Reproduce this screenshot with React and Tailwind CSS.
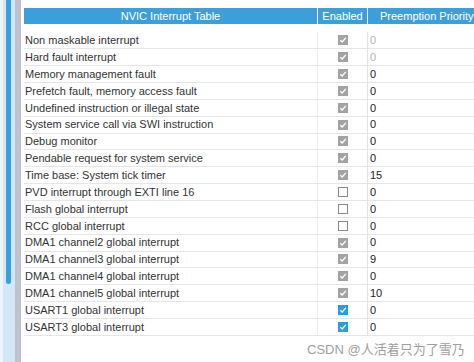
import React from "react";

const rows = [
  ["Non maskable interrupt", "gray", "0", true],
  ["Hard fault interrupt", "gray", "0", true],
  ["Memory management fault", "gray", "0"],
  ["Prefetch fault, memory access fault", "gray", "0"],
  ["Undefined instruction or illegal state", "gray", "0"],
  ["System service call via SWI instruction", "gray", "0"],
  ["Debug monitor", "gray", "0"],
  ["Pendable request for system service", "gray", "0"],
  ["Time base: System tick timer", "gray", "15"],
  ["PVD interrupt through EXTI line 16", "none", "0"],
  ["Flash global interrupt", "none", "0"],
  ["RCC global interrupt", "none", "0"],
  ["DMA1 channel2 global interrupt", "gray", "0"],
  ["DMA1 channel3 global interrupt", "gray", "9"],
  ["DMA1 channel4 global interrupt", "gray", "0"],
  ["DMA1 channel5 global interrupt", "gray", "10"],
  ["USART1 global interrupt", "blue", "0"],
  ["USART3 global interrupt", "blue", "0"],
];

function Check({ kind }) {
  if (kind === "none") {
    return <div className="w-[10px] h-[10px] border border-[#8a8a8a] bg-white" />;
  }
  const bg = kind === "blue" ? "bg-[#2a9de0]" : "bg-[#a3a3a3]";
  return (
    <div className={`w-[10px] h-[10px] ${bg} flex items-center justify-center`}>
      <svg width="8" height="8" viewBox="0 0 8 8">
        <path d="M1.3 4.2 L3.2 6 L6.8 1.8" fill="none" stroke="#ffffff" strokeWidth="1.3" />
      </svg>
    </div>
  );
}

export default function App() {
  return (
    <div
      className="relative w-[474px] h-[362px] bg-white flex overflow-hidden"
      style={{ fontFamily: '"Liberation Sans", Arial, sans-serif' }}
    >
      <div className="w-[3px] h-full bg-[#eef5fb]" />
      <div className="w-[3px] h-full bg-[#d3e8f7]" />
      <div className="w-[5px] h-full bg-[#d3e8f7]">
        <div className="w-full h-[284px] bg-[#3a9fdc] rounded-b-[3px]" />
      </div>
      <div className="w-[4px] h-full bg-[#d3e8f7]" />
      <div className="w-[6px] h-full bg-[#bcc3ca]" />
      <div className="w-[3px] h-full bg-white" />
      <div className="flex-1 flex flex-col pt-[8px] min-w-0">
        <div className="flex h-[16px] text-[11px] text-white leading-[16px]">
          <div className="w-[293px] bg-[#3d9fd9] text-center">NVIC Interrupt Table</div>
          <div className="w-[1px]" />
          <div className="w-[49px] bg-[#3d9fd9] text-center">Enabled</div>
          <div className="w-[1px]" />
          <div className="flex-1 bg-[#3d9fd9] pl-[12px] whitespace-nowrap overflow-hidden">
            Preemption Priority
          </div>
        </div>
        <div className="h-[8.4px]" />
        <div className="flex flex-col">
          {rows.map(([name, kind, prio, light], i) => (
            <div
              key={i}
              className="flex h-[16.86px] border-b border-[#e6e6e6] text-[11px] items-stretch"
            >
              <div className="w-[294px] pl-[1px] border-r border-[#eeeeee] text-[#333333] flex items-center whitespace-nowrap">
                {name}
              </div>
              <div className="w-[50px] border-r border-[#e4e4e4] flex items-center justify-center">
                <Check kind={kind} />
              </div>
              <div
                className={`flex-1 pl-[2px] flex items-center ${
                  light ? "text-[#b4b4b4]" : "text-[#222222]"
                }`}
              >
                {prio}
              </div>
            </div>
          ))}
        </div>
      </div>
      <div
        className="absolute left-[307px] top-[341px] text-[13px] text-[#a0a0a0] whitespace-nowrap leading-[18px]"
        style={{ fontFamily: '"Liberation Sans", "Noto Sans CJK SC", sans-serif' }}
      >
        CSDN @人活着只为了雪乃
      </div>
    </div>
  );
}
